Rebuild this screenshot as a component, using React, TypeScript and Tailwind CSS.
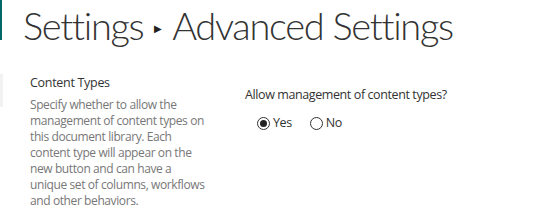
import React, { useState } from 'react';

const Radio: React.FC<{ checked: boolean; label: string; onClick: () => void }> = ({ checked, label, onClick }) => (
  <label className="flex items-center gap-[3px] cursor-pointer" onClick={onClick}>
    <span className="w-[13px] h-[13px] rounded-full border border-[#333] flex items-center justify-center">
      {checked && <span className="w-[7px] h-[7px] rounded-full bg-[#222]" />}
    </span>
    <span>{label}</span>
  </label>
);

export default function App() {
  const [allow, setAllow] = useState(true);

  return (
    <div className="w-[534px] h-[219px] bg-white overflow-hidden font-['Open_Sans',sans-serif]">
      {/* header */}
      <div className="flex">
        <div className="w-[2px] h-[40px] bg-[#03676c]" />
        <h1 className="ml-[21px] mt-[-2px] flex items-center font-['Lato',sans-serif] text-[38px] tracking-[-1.3px] font-light text-[#333] leading-[48px]">
          <span>Settings</span>
          <span className="mx-[11px] text-[10px] text-[#222] mt-[6px]">▶</span>
          <span>Advanced Settings</span>
        </h1>
      </div>

      <div className="flex mt-[22px]">
        <div className="w-[3px] h-[33px] bg-[#f2f2f2]" />
        <div className="ml-[27px] w-[180px] shrink-0">
          <h2 className="text-[12.5px] text-[#333] leading-[18px] tracking-[-0.3px]">Content Types</h2>
          <p className="text-[12px] text-[#777] leading-[16px] tracking-[-0.4px] mt-[5px]">
            Specify whether to allow the management of content types on this document library. Each content type will appear on the new button and can have a unique set of columns, workflows and other behaviors.
          </p>
        </div>
        <div className="ml-[35px] mt-[12px] text-[12.5px] tracking-[-0.4px] text-[#333]">
          <div className="leading-[18px]">Allow management of content types?</div>
          <div className="flex gap-[18px] mt-[10px] ml-[12px] leading-[18px]">
            <Radio checked={allow} label="Yes" onClick={() => setAllow(true)} />
            <Radio checked={!allow} label="No" onClick={() => setAllow(false)} />
          </div>
        </div>
      </div>
    </div>
  );
}
